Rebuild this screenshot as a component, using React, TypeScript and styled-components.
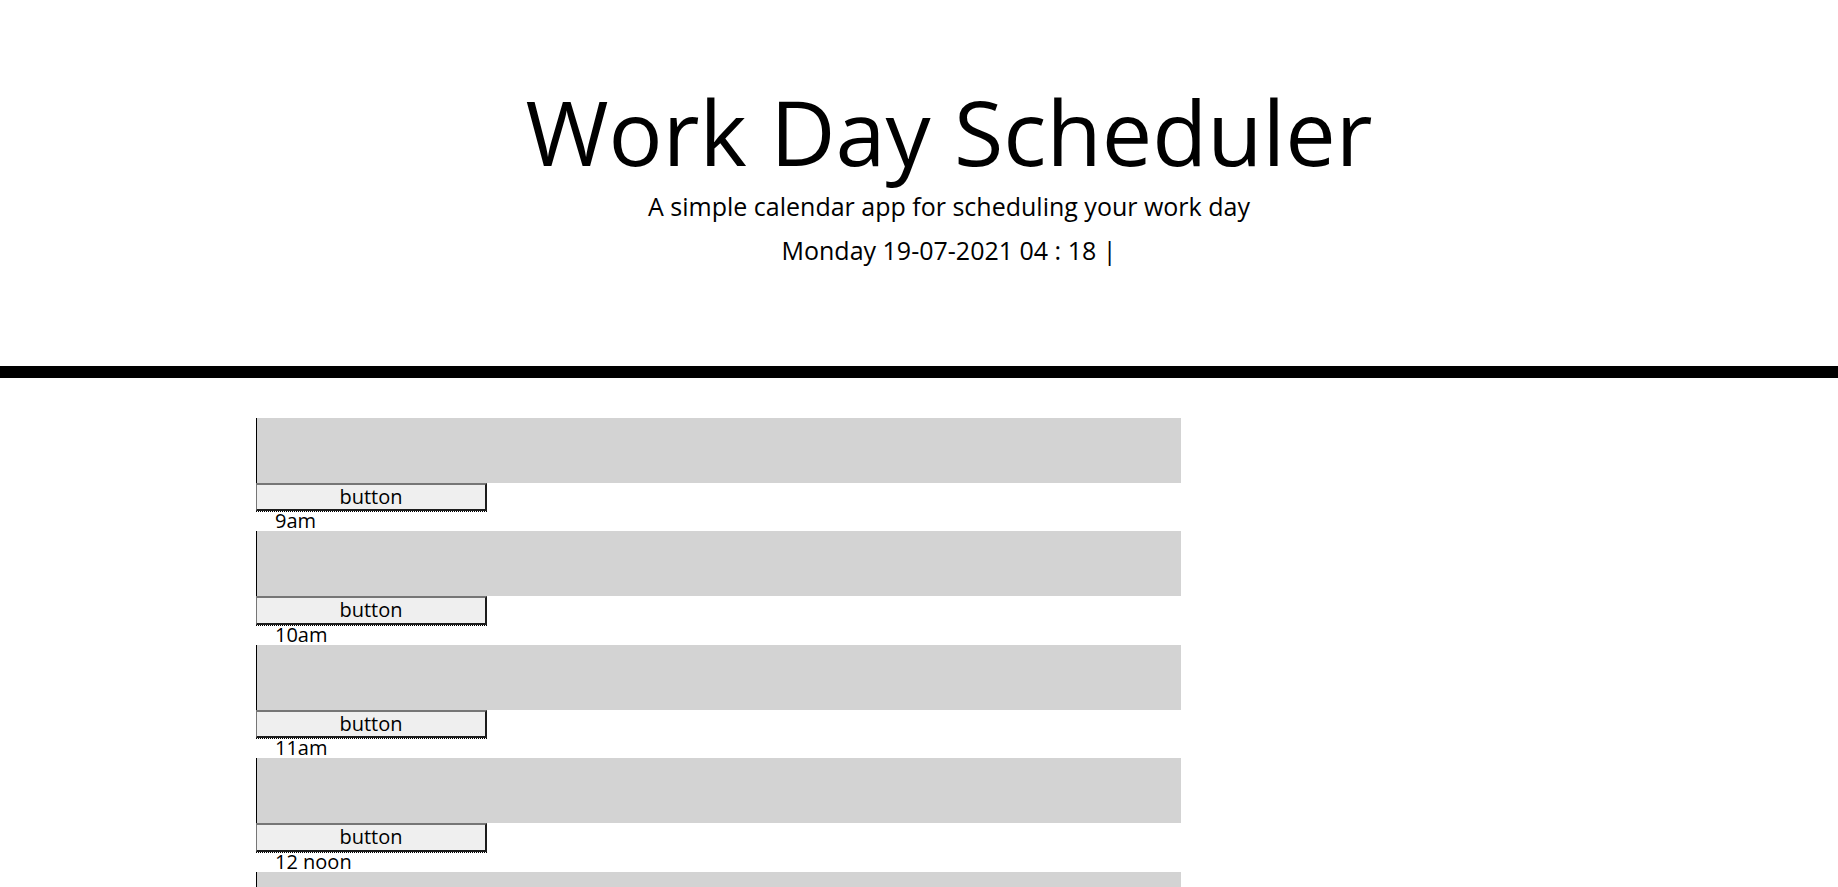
import * as React from "react";
import styled, { createGlobalStyle } from "styled-components";

const GlobalStyle = createGlobalStyle`
  html, body {
    margin: 0;
    padding: 0;
    background: #ffffff;
    color: #000000;
    font-family: "Open Sans", "Liberation Sans", sans-serif;
  }
`;

const Styled = {
  Header: styled.header`
    display: flex;
    flex-direction: column;
    align-items: center;
    padding: 77px 0 96px 60px;
    border-bottom: 12px solid #000;
    text-align: center;
  `,
  Title: styled.h1`
    margin: 0 0 3px;
    font-size: 90px;
    font-weight: 400;
    line-height: 108px;
  `,
  Lead: styled.p`
    margin: 0 0 6.5px;
    font-size: 25px;
    line-height: 37.5px;
  `,
  Today: styled.p`
    margin: 0;
    font-size: 25px;
    line-height: 37.5px;
  `,
  Schedule: styled.main`
    display: flex;
    flex-direction: column;
    width: 925px;
    margin: 40px 0 0 256px;
  `,
  Row: styled.div`
    display: flex;
    flex-direction: column;
    align-items: flex-start;
  `,
  Note: styled.textarea`
    box-sizing: border-box;
    display: block;
    width: 925px;
    height: 65px;
    margin: 0;
    padding: 4px 6px;
    border: none;
    border-left: 1px solid #000;
    background: #d3d3d3;
    resize: none;
    font-family: inherit;
    font-size: 20px;
  `,
  SaveButton: styled.button`
    position: relative;
    box-sizing: border-box;
    width: 231px;
    height: 28.5px;
    margin: 0;
    padding: 0;
    background: #efefef;
    border-style: solid;
    border-width: 2px 2px 2px 1px;
    border-color: #767676 #1c1c1c #1c1c1c #767676;
    color: #000;
    font-family: inherit;
    font-size: 20px;
    line-height: 22px;

    &::after {
      content: "";
      position: absolute;
      left: -1px;
      right: -2px;
      bottom: -3px;
      border-bottom: 1px dotted #000;
    }
  `,
  Hour: styled.div`
    height: 20px;
    padding-left: 19px;
    font-size: 20px;
    line-height: 20px;
  `,
};

const hours = ["9am", "10am", "11am", "12 noon", "1pm", "2pm", "3pm", "4pm", "5pm"];

const App = () => {
  const [notes, setNotes] = React.useState<Record<string, string>>({});

  return (
    <>
      <GlobalStyle />
      <Styled.Header>
        <Styled.Title>Work Day Scheduler</Styled.Title>
        <Styled.Lead>A simple calendar app for scheduling your work day</Styled.Lead>
        <Styled.Today>Monday 19-07-2021 04 : 18 |</Styled.Today>
      </Styled.Header>
      <Styled.Schedule>
        {hours.map((hour) => (
          <Styled.Row key={hour}>
            <Styled.Note
              value={notes[hour] ?? ""}
              onChange={(e) => setNotes({ ...notes, [hour]: e.target.value })}
            />
            <Styled.SaveButton type="button">button</Styled.SaveButton>
            <Styled.Hour>{hour}</Styled.Hour>
          </Styled.Row>
        ))}
      </Styled.Schedule>
    </>
  );
};

export default App;
